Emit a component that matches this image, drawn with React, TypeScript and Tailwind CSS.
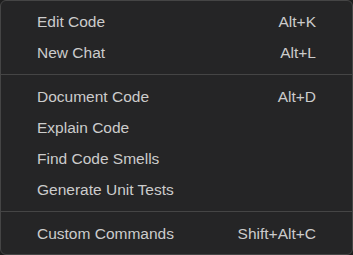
import React from 'react';

type Item = { label: string; shortcut?: string };

const groups: Item[][] = [
  [
    { label: 'Edit Code', shortcut: 'Alt+K' },
    { label: 'New Chat', shortcut: 'Alt+L' },
  ],
  [
    { label: 'Document Code', shortcut: 'Alt+D' },
    { label: 'Explain Code' },
    { label: 'Find Code Smells' },
    { label: 'Generate Unit Tests' },
  ],
  [{ label: 'Custom Commands', shortcut: 'Shift+Alt+C' }],
];

const App: React.FC = () => {
  return (
    <div className="w-[353px] h-[255px] bg-[#1e1e1e]">
      <div
        className="w-[353px] h-[255px] bg-[#252526] border border-[#454545] rounded-md py-[5px] text-[#cccccc] text-[15.5px]"
        style={{ fontFamily: '"Liberation Sans", Arial, sans-serif' }}
      >
        {groups.map((group, gi) => (
          <div key={gi}>
            {gi > 0 && <div className="h-px bg-[#454545] my-[6px]" />}
            {group.map((item) => (
              <div key={item.label} className="h-[31px] flex items-center justify-between pl-9 pr-9">
                <span>{item.label}</span>
                {item.shortcut && <span>{item.shortcut}</span>}
              </div>
            ))}
          </div>
        ))}
      </div>
    </div>
  );
};

export default App;
